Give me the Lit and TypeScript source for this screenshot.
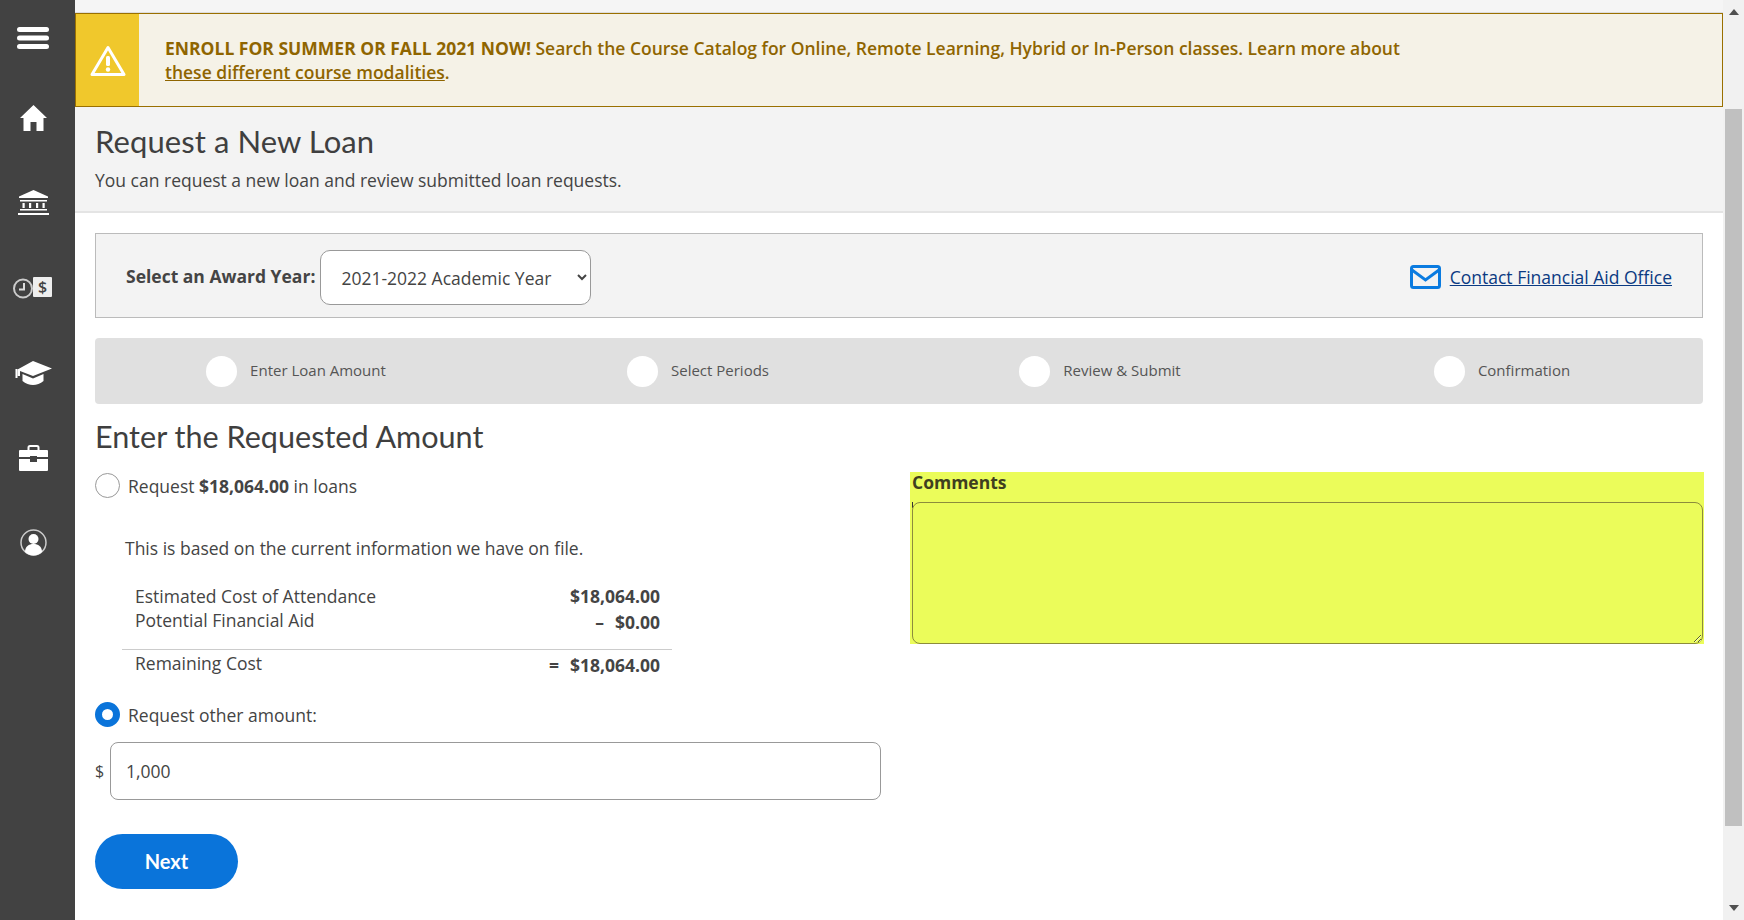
import { LitElement, css, html } from 'lit'
import { customElement } from 'lit/decorators.js'

const steps = ['Enter Loan Amount', 'Select Periods', 'Review & Submit', 'Confirmation']

@customElement('app-root')
export class AppRoot extends LitElement {
  static styles = css`
    :host {
      display: block;
      height: 920px;
      overflow: hidden;
      font-family: 'Open Sans', sans-serif;
      font-size: 17.5px;
      color: #444;
      background: #fff;
    }
    * { box-sizing: border-box; }
    .shell { display: flex; height: 920px; }

    .sidebar { width: 75px; flex: none; background: #424242; display: flex; flex-direction: column; padding-right: 9px; }
    .nav-item { height: 85px; display: flex; align-items: center; justify-content: center; }
    .nav-item.menu { height: 75px; }

    main { flex: 1; min-width: 0; display: flex; flex-direction: column; }
    .strip { height: 13px; flex: none; background: #f5f5f5; border-bottom: 1px solid #ddd; }

    .alert { height: 94px; flex: none; display: flex; background: #f5f2e7; border: 1px solid #9a7000; color: #8f6500; }
    .alert-icon { width: 63px; flex: none; background: #f0c82c; display: flex; align-items: center; justify-content: center; padding-top: 1px; }
    .alert-text { padding: 22px 0 0 26px; width: 1290px; line-height: 24px; font-weight: 600; }
    .alert-text b { font-weight: 700; }
    .alert-text a { color: inherit; text-decoration: underline; }

    .page-head { height: 106px; flex: none; background: #f3f3f3; border-bottom: 2px solid #e4e4e4; padding: 14px 20px 0; }
    h1, h2 { margin: 0; font-family: Lato, 'Open Sans', sans-serif; font-weight: 400; color: #3f3f3f; line-height: 40px; }
    h1 { font-size: 31px; letter-spacing: 0.08px; }
    h2 { font-size: 30.6px; }
    .page-head p { margin: 7px 0 0; line-height: 24px; }

    .content { padding: 20px 20px 0; }
    .year-box { height: 85px; background: #f3f3f3; border: 1px solid #bbb; display: flex; align-items: center; padding: 0 30px; }
    .year-box label { font-weight: 700; margin-right: 5px; }
    select { width: 271px; height: 55px; margin-top: 4px; border: 1px solid #999; border-radius: 10px; background: #fff; color: #444; font: 17.5px 'Open Sans', sans-serif; padding: 0 9px 0 16px; }
    .contact { margin-left: auto; margin-top: 2px; display: flex; align-items: center; gap: 9px; }
    .contact a { color: #0b3a82; text-decoration: underline; }

    .steps { margin-top: 20px; height: 66px; background: #e0e0e0; border-radius: 4px; display: grid; grid-template-columns: repeat(4, 1fr); }
    .step { display: flex; align-items: center; justify-content: center; gap: 13px; font-size: 15px; color: #555; }
    .step-label { padding-bottom: 2px; }
    .dot { width: 31px; height: 31px; border-radius: 50%; background: #fff; }

    h2 { margin-top: 13px; }
    .columns { display: grid; grid-template-columns: 786px 794px; column-gap: 29px; margin-top: 16px; }

    .choice { display: flex; align-items: center; gap: 8px; height: 25px; }
    .choice input { appearance: none; width: 25px; height: 25px; margin: 0; border-radius: 50%; border: 1px solid #999; background: #fff; }
    .choice input:checked { border: 7px solid #0a74da; }
    .based { margin: 38px 0 0 30px; line-height: 24px; }

    .costs { margin: 24px 0 0 27px; width: 550px; }
    .row { display: flex; justify-content: space-between; padding: 0 12px 0 13px; line-height: 24px; }
    .row + .row b { position: relative; top: 2px; }
    .row.total { border-top: 1px solid #ccc; margin-top: 17px; padding-top: 1px; }
    .op { margin-right: 11px; }

    .other { margin-top: 27px; }
    .amount { display: flex; align-items: center; margin-top: 15px; width: 786px; }
    .amount span { width: 15px; font-size: 16px; }
    .amount input { flex: 1; height: 58px; border: 1px solid #999; border-radius: 8px; padding: 0 15px; font: 17.5px 'Open Sans', sans-serif; color: #444; background: #fff; }

    .next { display: block; margin-top: 34px; width: 143px; height: 55px; border: none; border-radius: 28px; padding: 0 0 2px; background: #0a74da; color: #fff; font: 700 20px Lato, 'Open Sans', sans-serif; }

    .comments { height: 172px; background: linear-gradient(#333, #333) 2px 30px / 1px 6px no-repeat, #ebfc5a; padding: 0 1px 0 2px; margin-top: -1px; display: flex; flex-direction: column; }
    .comments label { font-weight: 700; height: 30px; line-height: 20px; color: #3f3f1f; }
    textarea { flex: 1; width: 100%; display: block; border: 1px solid #8c8c3c; border-radius: 8px; background: #ebfc5a; margin: 0; }

    .scrollbar { width: 21px; flex: none; background: #f1f1f1; display: flex; flex-direction: column; align-items: center; }
    .arrow { height: 23px; flex: none; display: flex; align-items: center; justify-content: center; }
    .gap-top { height: 86px; flex: none; }
    .thumb { width: 17px; height: 717px; flex: none; background: #c0c0c0; }
    .gap-bottom { flex: 1; }
    .bottom { height: 24px; flex: none; display: flex; align-items: center; justify-content: center; }
  `

  render() {
    return html`
      <div class="shell">
        <nav class="sidebar">
          <div class="nav-item menu">
            <svg width="32" height="22" viewBox="0 0 32 22" fill="#fff"><rect width="32" height="5" rx="2.5"/><rect y="8.5" width="32" height="5" rx="2.5"/><rect y="17" width="32" height="5" rx="2.5"/></svg>
          </div>
          <div class="nav-item">
            <svg width="27" height="26" viewBox="0 0 27 26" fill="#fff"><path d="M13.5 0 27 13h-3.5v13h-7v-9h-6v9h-7V13H0z"/></svg>
          </div>
          <div class="nav-item">
            <svg width="31" height="25" viewBox="0 0 31 25" fill="#fff"><path d="M15.5 0 30 6.500V8H1V6.500z"/><rect x="2" y="10" width="27" height="1.500"/><rect x="4.500" y="13" width="2.200" height="5"/><rect x="11" y="13" width="2.200" height="5"/><rect x="18" y="13" width="2.200" height="5"/><rect x="24.500" y="13" width="2.200" height="5"/><rect x="2" y="19" width="27" height="1.500"/><rect x="0" y="23" width="31" height="2"/></svg>
          </div>
          <div class="nav-item">
            <svg width="40" height="24" viewBox="0 0 40 24"><rect x="20" y="1" width="19" height="20" fill="#eee" rx="1"/><circle cx="10" cy="12.500" r="9" fill="#424242" stroke="#ccc" stroke-width="2"/><path d="M11 7v6.500H6" fill="none" stroke="#ddd" stroke-width="2"/><text x="29.500" y="17" text-anchor="middle" font-family="Open Sans" font-weight="600" font-size="16" fill="#424242">$</text></svg>
          </div>
          <div class="nav-item">
            <svg width="38" height="24" viewBox="0 0 38 24" fill="#fff"><path d="M19 0 38 7.500 19 15 6 10v5H3.500V8.500z"/><path d="M8.500 13 19 17.500 29.500 13v7c-3 2.500-7 4-10.500 4s-7.500-1.500-10.500-4z"/><rect x="1.500" y="8" width="2" height="9"/></svg>
          </div>
          <div class="nav-item">
            <svg width="29" height="26" viewBox="0 0 29 26" fill="#fff"><path d="M9.500 6V2.500A1.500 1.500 0 0 1 11 1h7a1.500 1.500 0 0 1 1.500 1.500V6" fill="none" stroke="#fff" stroke-width="2"/><path d="M1 5h27a1 1 0 0 1 1 1v6H18v-1h-7v1H0V6a1 1 0 0 1 1-1z"/><path d="M0 14h11v3h7v-3h11v11a1 1 0 0 1-1 1H1a1 1 0 0 1-1-1z"/></svg>
          </div>
          <div class="nav-item">
            <svg width="27" height="27" viewBox="0 0 27 27"><circle cx="13.500" cy="13.500" r="12.500" fill="#424242" stroke="#ccc" stroke-width="1.500"/><circle cx="13.500" cy="10" r="5" fill="#fff"/><path d="M5 23c0-5.500 3.800-8 8.500-8s8.500 2.500 8.500 8c-2.500 2.300-5 3.500-8.500 3.500S7.500 25.300 5 23z" fill="#fff"/></svg>
          </div>
        </nav>

        <main>
          <div class="strip"></div>
          <div class="alert">
            <div class="alert-icon">
              <svg width="36" height="32" viewBox="0 0 36 32"><path d="M18 2.500 34 29.500H2z" fill="none" stroke="#fff" stroke-width="3" stroke-linejoin="round"/><rect x="16" y="11" width="4" height="10" rx="1.500" fill="#fff"/><circle cx="18" cy="24.500" r="2.200" fill="#fff"/></svg>
            </div>
            <div class="alert-text"><b>ENROLL FOR SUMMER OR FALL 2021 NOW!</b> Search the Course Catalog for Online, Remote Learning, Hybrid or In-Person classes. Learn more about <a href="#">these different course modalities</a>.</div>
          </div>

          <header class="page-head">
            <h1>Request a New Loan</h1>
            <p>You can request a new loan and review submitted loan requests.</p>
          </header>

          <div class="content">
            <div class="year-box">
              <label>Select an Award Year:</label>
              <select><option>2021-2022 Academic Year</option></select>
              <div class="contact">
                <svg width="31" height="24" viewBox="0 0 31 24"><rect x="1.500" y="1.500" width="28" height="21" rx="2" fill="none" stroke="#0a7be0" stroke-width="3"/><path d="M2 5l13.500 10L29 5" fill="none" stroke="#0a7be0" stroke-width="3"/></svg>
                <a href="#">Contact Financial Aid Office</a>
              </div>
            </div>

            <div class="steps">
              ${steps.map((s) => html`<div class="step"><span class="dot"></span><span class="step-label">${s}</span></div>`)}
            </div>

            <h2>Enter the Requested Amount</h2>

            <div class="columns">
              <div>
                <div class="choice"><input type="radio" name="amt" /><span>Request <b>$18,064.00</b> in loans</span></div>
                <p class="based">This is based on the current information we have on file.</p>
                <div class="costs">
                  <div class="row"><span>Estimated Cost of Attendance</span><b>$18,064.00</b></div>
                  <div class="row"><span>Potential Financial Aid</span><b><span class="op">–</span>$0.00</b></div>
                  <div class="row total"><span>Remaining Cost</span><b><span class="op">=</span>$18,064.00</b></div>
                </div>
                <div class="choice other"><input type="radio" name="amt" checked /><span>Request other amount:</span></div>
                <div class="amount"><span>$</span><input type="text" value="1,000" /></div>
                <button class="next">Next</button>
              </div>
              <div class="comments">
                <label>Comments</label>
                <textarea></textarea>
              </div>
            </div>
          </div>
        </main>

        <div class="scrollbar">
          <div class="arrow"><svg width="10" height="6" viewBox="0 0 10 6" fill="#505050"><path d="M5 0l5 6H0z"/></svg></div>
          <div class="gap-top"></div>
          <div class="thumb"></div>
          <div class="gap-bottom"></div>
          <div class="bottom"><svg width="10" height="6" viewBox="0 0 10 6" fill="#505050"><path d="M5 6L0 0h10z"/></svg></div>
        </div>
      </div>
    `
  }
}
